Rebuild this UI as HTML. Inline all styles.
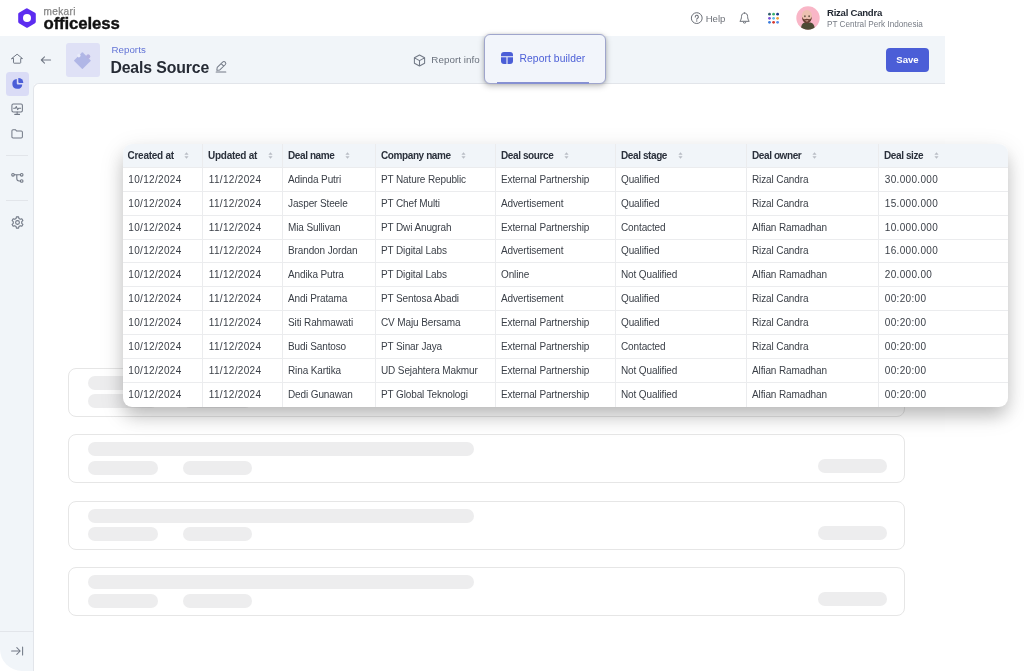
<!DOCTYPE html>
<html><head><meta charset="utf-8">
<style>
*{box-sizing:border-box;margin:0;padding:0}
html,body{width:1024px;height:671px;overflow:hidden;background:#fff;font-family:"Liberation Sans",sans-serif;color:#232933}
.abs{position:absolute}
#bar{left:0;top:36px;width:945px;height:48px;background:#f1f5f9}
#side{left:0;top:36px;width:34px;height:635px;background:#f1f5f9;border-bottom-left-radius:22px}
#panel{left:33px;top:83px;width:912px;height:588px;background:#fff;border-top-left-radius:6px;border-left:1px solid #e2e5ea;border-top:1px solid #e2e5ea}
.card{left:68px;width:837px;height:49px;border:1px solid #e6e6e6;border-radius:8px;background:#fff}
.sk{background:#ededee;border-radius:7px;height:14px}
#tbl{left:122.5px;top:143.5px;width:885.5px;height:263.5px;background:#fff;border-radius:9px;overflow:hidden;box-shadow:0 10px 18px -2px rgba(0,0,0,.2),0 7px 26px rgba(0,0,0,.12)}
table{border-collapse:collapse;width:885.5px;table-layout:fixed;font-size:10px;letter-spacing:-.12px}
th,td{height:23.89px;padding:0 0 0 5px;text-align:left;border-right:1px solid #ebecee;border-bottom:1px solid #ebecee;white-space:nowrap;overflow:hidden}
th{padding-top:1px;background:#f1f5f9;font-weight:700;font-size:10px;letter-spacing:-.4px;color:#2a303b}
th:nth-child(1),th:nth-child(2){letter-spacing:-.26px}
.n{font-size:10px;letter-spacing:.33px;padding-left:5.8px}
td{color:#3a3f47}
th:last-child,td:last-child{border-right:0}
tr:last-child td{border-bottom:0;height:24.6px}
.srt{display:inline-block;margin-left:10.6px;vertical-align:middle;position:relative;top:-1px}
#root{position:absolute;left:0;top:0;width:1024px;height:671px;will-change:transform;transform:translateZ(0)}
</style></head><body><div id="root">
<!-- top header -->
<svg class="abs" style="left:17px;top:7px" width="20" height="22" viewBox="0 0 20 22"><path d="M10 1.2 L18 5.8 Q18.8 6.3 18.8 7.2 V14.8 Q18.8 15.7 18 16.2 L10.9 20.4 Q10 20.9 9.1 20.4 L2 16.2 Q1.2 15.7 1.2 14.8 V7.2 Q1.2 6.3 2 5.8 L9.1 1.6 Q10 1.1 10.9 1.6Z" fill="#5c2cf0"/><circle cx="10" cy="11" r="4" fill="#fff"/></svg>
<div class="abs" style="left:43.6px;top:5.5px;font-size:10px;color:#858585;letter-spacing:.36px;-webkit-text-stroke:.25px #858585">mekari</div>
<div class="abs" style="left:43.5px;top:13.8px;letter-spacing:-.12px;font-size:16.8px;font-weight:700;color:#111;-webkit-text-stroke:.35px #111">officeless</div>

<div class="abs" style="left:705.7px;top:12.5px;font-size:9.6px;color:#6f737a">Help</div>
<div class="abs" style="left:827px;top:7px;font-size:9.6px;letter-spacing:-.26px;font-weight:700;color:#232933">Rizal Candra</div>
<div class="abs" style="left:827px;top:20.2px;font-size:8.2px;color:#777c85">PT Central Perk Indonesia</div>

<div id="bar" class="abs"></div>
<div id="side" class="abs"></div>
<div id="panel" class="abs"></div>


<div class="abs" style="left:484px;top:33.5px;width:122px;height:50.5px;background:#f2f5fb;border:1px solid #9fa5cc;border-radius:6px;box-shadow:0 2px 6px rgba(0,0,0,.26),0 0 3px rgba(0,0,0,.12)"></div>
<!-- sidebar icons -->
<svg class="abs" style="left:10.2px;top:52.3px" width="14.2" height="13.3" viewBox="0 0 15 14" fill="none" stroke="#727986" stroke-width="1.05" stroke-linejoin="round" stroke-linecap="round"><path d="M1.8 6.9 L7.5 2.3 L13.2 6.9 H11.3 V11.2 Q11.3 11.8 10.7 11.8 H4.3 Q3.7 11.8 3.7 11.2 V6.9Z"/></svg>
<div class="abs" style="left:5.6px;top:72px;width:23.3px;height:23.6px;background:#dadcf6;border-radius:3.5px"></div>
<svg class="abs" style="left:10.6px;top:77px" width="13.4" height="13" viewBox="0 0 13 13"><path d="M5.6 1.9 A5 5 0 1 0 11.1 7.4 H6.6 Q5.6 7.4 5.6 6.4Z" fill="#4b5ed7"/><path d="M7.1 0.9 A5 5 0 0 1 12.1 5.9 H8.1 Q7.1 5.9 7.1 4.9Z" fill="#4b5ed7"/></svg>
<svg class="abs" style="left:10px;top:102px" width="14.3" height="14.3" viewBox="0 0 15 15" fill="none" stroke="#727986" stroke-width="1.1" stroke-linejoin="round" stroke-linecap="round"><rect x="2" y="2.2" width="11" height="8.2" rx="1.4"/><path d="M7.5 10.4 V12.8 M5 13 H10 M3.8 6.5 H5.6 L6.6 4.8 L8 8 L9 6.5 H11.2"/></svg>
<svg class="abs" style="left:10px;top:126.6px" width="14.3" height="13.35" viewBox="0 0 15 14" fill="none" stroke="#727986" stroke-width="1.05" stroke-linejoin="round"><path d="M2 4 Q2 2.8 3.2 2.8 H5.6 L7 4.3 H11.8 Q13 4.3 13 5.5 V10.3 Q13 11.5 11.8 11.5 H3.2 Q2 11.5 2 10.3Z"/></svg>
<div class="abs" style="left:6px;top:155px;width:22px;height:1px;background:#e2e5ea"></div>
<svg class="abs" style="left:10px;top:171px" width="15" height="14" viewBox="0 0 15 14" fill="none" stroke="#727986" stroke-width="1.1" stroke-linecap="round"><circle cx="3" cy="3.8" r="1.3"/><circle cx="11.7" cy="3.8" r="1.3"/><circle cx="11.7" cy="10" r="1.3"/><path d="M4.3 3.8 H10.4 M6.8 3.8 V7.6 Q6.8 10 9.2 10 H10.4"/></svg>
<div class="abs" style="left:6px;top:200px;width:22px;height:1px;background:#e2e5ea"></div>
<svg class="abs" style="left:9.7px;top:215.2px" width="15" height="15" viewBox="0 0 15 15" fill="none" stroke="#727986" stroke-width="1.1" stroke-linejoin="round"><circle cx="7.5" cy="7.5" r="1.9"/><path d="M6.10 3.43 L6.41 1.90 L8.59 1.90 L8.90 3.43 L10.32 4.25 L11.80 3.76 L12.89 5.64 L11.72 6.68 L11.72 8.32 L12.89 9.36 L11.80 11.24 L10.32 10.75 L8.90 11.57 L8.59 13.10 L6.41 13.10 L6.10 11.57 L4.68 10.75 L3.20 11.24 L2.11 9.36 L3.28 8.32 L3.28 6.68 L2.11 5.64 L3.20 3.76 L4.68 4.25Z"/></svg>
<div class="abs" style="left:0;top:631px;width:33px;height:1px;background:#e2e5ea"></div>
<svg class="abs" style="left:10px;top:645px" width="15" height="12" viewBox="0 0 15 12" fill="none" stroke="#727986" stroke-width="1.05" stroke-linecap="round" stroke-linejoin="round"><path d="M1.6 6 H10 M6.8 2.6 L10.2 6 L6.8 9.4 M12.6 2 V10"/></svg>
<!-- back arrow -->
<svg class="abs" style="left:39px;top:54px" width="14" height="12" viewBox="0 0 14 12" fill="none" stroke="#727986" stroke-width="1.05" stroke-linecap="round" stroke-linejoin="round"><path d="M11.6 6 H2.6 M5.5 2.9 L2.3 6 L5.5 9.1"/></svg>
<!-- thumbnail -->
<div class="abs" style="left:66px;top:43px;width:34px;height:34px;background:#dfe1f6;border-radius:3px"></div>
<svg class="abs" style="left:66px;top:43px" width="34" height="34" viewBox="0 0 34 34"><g transform="translate(16.4 17.6) rotate(45)"><rect x="-6.1" y="-6.1" width="12.2" height="12.2" rx=".6" fill="#b0b6e6"/><circle cx="1.2" cy="-7" r="2.1" fill="#b4b1e2"/><circle cx="-6" cy="-1" r="1.7" fill="#e9ebfa"/></g></svg>
<!-- pencil -->
<svg class="abs" style="left:215px;top:60px" width="13" height="14" viewBox="0 0 13 14" fill="none" stroke="#727986" stroke-width="1" stroke-linejoin="round" stroke-linecap="round"><g transform="translate(1.8 10.3) rotate(-44)"><path d="M0 0 L2.4 -1.85 H9.9 A1.85 1.85 0 0 1 9.9 1.85 H2.4Z M7.8 -1.85 V1.85"/></g><path d="M1.2 12 H10.8" stroke-width="1.1"/></svg>
<!-- cube -->
<svg class="abs" style="left:413px;top:53.5px" width="13" height="13" viewBox="0 0 13 13" fill="none" stroke="#727986" stroke-width="1.05" stroke-linejoin="round"><path d="M6.5 1 L11.6 3.8 V9.2 L6.5 12 L1.4 9.2 V3.8Z M1.5 3.9 L6.5 6.6 L11.5 3.9 M6.5 6.6 V12"/></svg>
<!-- help, bell, grid, avatar -->
<svg class="abs" style="left:690px;top:11px" width="14" height="14" viewBox="0 0 14 14" fill="none" stroke="#6a6e76" stroke-width="1"><g transform="translate(.25 .6)"><circle cx="6.5" cy="6.5" r="5.4"/><path d="M5 5.3 A1.55 1.55 0 1 1 7.3 6.6 Q6.5 7.05 6.5 7.7" stroke-linecap="round" stroke-width="1.05"/><circle cx="6.5" cy="9.4" r=".65" fill="#6a6e76" stroke="none"/></g></svg>
<svg class="abs" style="left:738px;top:11px" width="13" height="14" viewBox="0 0 13 14" fill="none" stroke="#6a6e76" stroke-width="1" stroke-linejoin="round" stroke-linecap="round"><path d="M6.55 2 C4.4 2 3.6 3.6 3.5 5.4 C3.4 7.6 3 8.8 1.9 10.3 H11.2 C10.1 8.8 9.7 7.6 9.6 5.4 C9.5 3.6 8.7 2 6.55 2Z M5.3 11.7 Q6.55 12.8 7.8 11.7"/></svg>
<svg class="abs" style="left:767px;top:12px" width="13" height="13" viewBox="0 0 13 13"><g><circle cx="2.5" cy="2.2" r="1.4" fill="#2f5f6b"/><circle cx="6.6" cy="2.2" r="1.4" fill="#3bb273"/><circle cx="10.6" cy="2.2" r="1.4" fill="#1f3a8a"/><circle cx="2.5" cy="6.3" r="1.4" fill="#7a4fd8"/><circle cx="6.6" cy="6.3" r="1.4" fill="#5fb9e6"/><circle cx="10.6" cy="6.3" r="1.4" fill="#f0a23a"/><circle cx="2.5" cy="10.3" r="1.4" fill="#3a7bdc"/><circle cx="6.6" cy="10.3" r="1.4" fill="#d63a30"/><circle cx="10.6" cy="10.3" r="1.4" fill="#5b8fe6"/></g></svg>
<svg class="abs" style="left:795.5px;top:6.4px" width="24" height="24" viewBox="0 0 24 24"><defs><clipPath id="av"><circle cx="12" cy="12" r="11.7"/></clipPath></defs><circle cx="12" cy="12" r="11.7" fill="#f9b6c7"/><g clip-path="url(#av)"><path d="M4.8 24 Q5 17.6 8.6 16.6 L14.6 16.6 Q18.6 17.6 19 24Z" fill="#4d4a34"/><ellipse cx="10.9" cy="9.8" rx="5.1" ry="5.9" fill="#edc1b1"/><path d="M5.9 10.6 Q6 17 10.9 17.6 Q15.8 17 15.9 10.6 Q15 13.4 13.2 13.2 Q10.9 12.4 8.6 13.2 Q6.8 13.4 5.9 10.6Z" fill="#6a4034"/><ellipse cx="8.9" cy="10.3" rx=".8" ry="1" fill="#5a4a3a"/><ellipse cx="13.1" cy="10.3" rx=".8" ry="1" fill="#5a4a3a"/><path d="M9.6 14.6 Q10.9 15.4 12.2 14.6" stroke="#e9b9a8" stroke-width=".9" fill="none"/></g></svg>
<!-- layout icon -->
<svg class="abs" style="left:501px;top:52px" width="12" height="12" viewBox="0 0 12 12"><rect width="12" height="12" rx="3" fill="#4b5ed7"/><path d="M0 4.7 H12 M6 4.7 V12" stroke="#f1f5f9" stroke-width="1.1"/></svg>
<div class="abs" style="left:111.4px;top:43.8px;font-size:9.7px;letter-spacing:.08px;color:#6273d6">Reports</div>
<div class="abs" style="left:110.4px;top:58.5px;font-size:15.8px;letter-spacing:-.12px;font-weight:700;color:#262b35">Deals Source</div>
<div class="abs" style="left:431.3px;top:53.9px;font-size:9.8px;letter-spacing:.05px;color:#6b727e">Report info</div>
<div class="abs" style="left:497px;top:82px;width:92px;height:1.8px;background:#8690d2"></div>
<div class="abs" style="left:519.5px;top:52.5px;font-size:10.3px;letter-spacing:.08px;color:#4b5ed7">Report builder</div>
<div class="abs" style="left:886px;top:48px;width:43px;height:24px;background:#4b5ed7;border-radius:4px;color:#fff;font-size:9.6px;font-weight:700;text-align:center;line-height:24px">Save</div>

<!-- skeleton cards -->
<div class="abs card" style="top:368px"></div>
<div class="abs card" style="top:434px"></div>
<div class="abs card" style="top:501px"></div>
<div class="abs card" style="top:567px"></div>

<div class="abs sk" style="left:88px;top:375.5px;width:385.5px"></div><div class="abs sk" style="left:88px;top:394px;width:69.5px"></div><div class="abs sk" style="left:182.5px;top:394px;width:69.5px"></div><div class="abs sk" style="left:818px;top:392.5px;width:69px"></div>
<div class="abs sk" style="left:88px;top:442.0px;width:385.5px"></div><div class="abs sk" style="left:88px;top:460.5px;width:69.5px"></div><div class="abs sk" style="left:182.5px;top:460.5px;width:69.5px"></div><div class="abs sk" style="left:818px;top:459.0px;width:69px"></div>
<div class="abs sk" style="left:88px;top:508.5px;width:385.5px"></div><div class="abs sk" style="left:88px;top:527px;width:69.5px"></div><div class="abs sk" style="left:182.5px;top:527px;width:69.5px"></div><div class="abs sk" style="left:818px;top:525.5px;width:69px"></div>
<div class="abs sk" style="left:88px;top:575.0px;width:385.5px"></div><div class="abs sk" style="left:88px;top:593.5px;width:69.5px"></div><div class="abs sk" style="left:182.5px;top:593.5px;width:69.5px"></div><div class="abs sk" style="left:818px;top:592.0px;width:69px"></div>
<div id="tbl" class="abs">
<table>
<colgroup><col style="width:80px"><col style="width:80px"><col style="width:93px"><col style="width:120px"><col style="width:120px"><col style="width:131px"><col style="width:132px"><col></colgroup>
<tr><th>Created at<svg class="srt" width="5" height="7" viewBox="0 0 5 7"><path d="M2.5 0.2 L4.6 2.8 H0.4Z M2.5 6.8 L4.6 4.2 H0.4Z" fill="#b9bdc5"/></svg></th><th>Updated at<svg class="srt" width="5" height="7" viewBox="0 0 5 7"><path d="M2.5 0.2 L4.6 2.8 H0.4Z M2.5 6.8 L4.6 4.2 H0.4Z" fill="#b9bdc5"/></svg></th><th>Deal name<svg class="srt" width="5" height="7" viewBox="0 0 5 7"><path d="M2.5 0.2 L4.6 2.8 H0.4Z M2.5 6.8 L4.6 4.2 H0.4Z" fill="#b9bdc5"/></svg></th><th>Company name<svg class="srt" width="5" height="7" viewBox="0 0 5 7"><path d="M2.5 0.2 L4.6 2.8 H0.4Z M2.5 6.8 L4.6 4.2 H0.4Z" fill="#b9bdc5"/></svg></th><th>Deal source<svg class="srt" width="5" height="7" viewBox="0 0 5 7"><path d="M2.5 0.2 L4.6 2.8 H0.4Z M2.5 6.8 L4.6 4.2 H0.4Z" fill="#b9bdc5"/></svg></th><th>Deal stage<svg class="srt" width="5" height="7" viewBox="0 0 5 7"><path d="M2.5 0.2 L4.6 2.8 H0.4Z M2.5 6.8 L4.6 4.2 H0.4Z" fill="#b9bdc5"/></svg></th><th>Deal owner<svg class="srt" width="5" height="7" viewBox="0 0 5 7"><path d="M2.5 0.2 L4.6 2.8 H0.4Z M2.5 6.8 L4.6 4.2 H0.4Z" fill="#b9bdc5"/></svg></th><th>Deal size<svg class="srt" width="5" height="7" viewBox="0 0 5 7"><path d="M2.5 0.2 L4.6 2.8 H0.4Z M2.5 6.8 L4.6 4.2 H0.4Z" fill="#b9bdc5"/></svg></th></tr>
<tr><td class="n">10/12/2024</td><td class="n">11/12/2024</td><td>Adinda Putri</td><td>PT Nature Republic</td><td>External Partnership</td><td>Qualified</td><td>Rizal Candra</td><td class="n">30.000.000</td></tr>
<tr><td class="n">10/12/2024</td><td class="n">11/12/2024</td><td>Jasper Steele</td><td>PT Chef Multi</td><td>Advertisement</td><td>Qualified</td><td>Rizal Candra</td><td class="n">15.000.000</td></tr>
<tr><td class="n">10/12/2024</td><td class="n">11/12/2024</td><td>Mia Sullivan</td><td>PT Dwi Anugrah</td><td>External Partnership</td><td>Contacted</td><td>Alfian Ramadhan</td><td class="n">10.000.000</td></tr>
<tr><td class="n">10/12/2024</td><td class="n">11/12/2024</td><td>Brandon Jordan</td><td>PT Digital Labs</td><td>Advertisement</td><td>Qualified</td><td>Rizal Candra</td><td class="n">16.000.000</td></tr>
<tr><td class="n">10/12/2024</td><td class="n">11/12/2024</td><td>Andika Putra</td><td>PT Digital Labs</td><td>Online</td><td>Not Qualified</td><td>Alfian Ramadhan</td><td class="n">20.000.00</td></tr>
<tr><td class="n">10/12/2024</td><td class="n">11/12/2024</td><td>Andi Pratama</td><td>PT Sentosa Abadi</td><td>Advertisement</td><td>Qualified</td><td>Rizal Candra</td><td class="n">00:20:00</td></tr>
<tr><td class="n">10/12/2024</td><td class="n">11/12/2024</td><td>Siti Rahmawati</td><td>CV Maju Bersama</td><td>External Partnership</td><td>Qualified</td><td>Rizal Candra</td><td class="n">00:20:00</td></tr>
<tr><td class="n">10/12/2024</td><td class="n">11/12/2024</td><td>Budi Santoso</td><td>PT Sinar Jaya</td><td>External Partnership</td><td>Contacted</td><td>Rizal Candra</td><td class="n">00:20:00</td></tr>
<tr><td class="n">10/12/2024</td><td class="n">11/12/2024</td><td>Rina Kartika</td><td>UD Sejahtera Makmur</td><td>External Partnership</td><td>Not Qualified</td><td>Alfian Ramadhan</td><td class="n">00:20:00</td></tr>
<tr><td class="n">10/12/2024</td><td class="n">11/12/2024</td><td>Dedi Gunawan</td><td>PT Global Teknologi</td><td>External Partnership</td><td>Not Qualified</td><td>Alfian Ramadhan</td><td class="n">00:20:00</td></tr>
</table>
</div>
</div></body></html>
